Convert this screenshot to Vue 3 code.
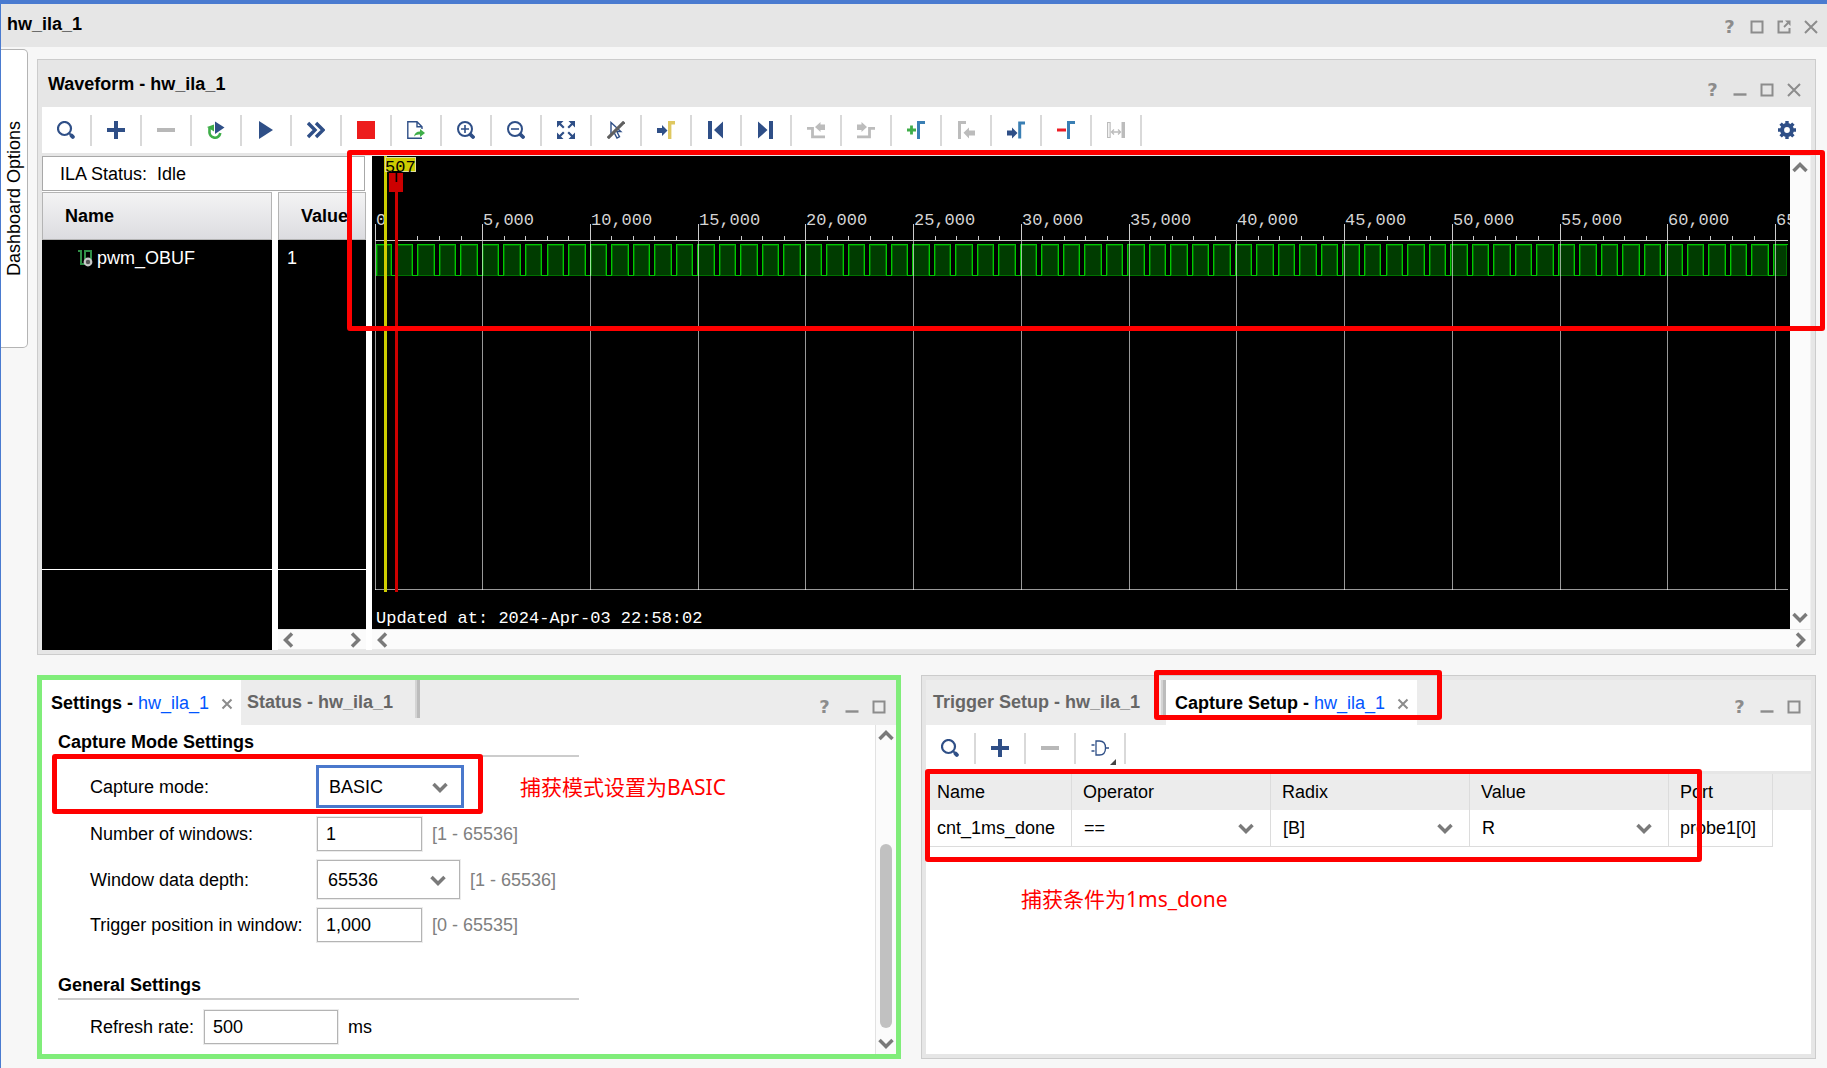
<script setup>
import { ref } from 'vue'

const NAVY = '#2f4f87'

const tools = [
  { id: 'search', label: 'Search' },
  { id: 'plus', label: 'Add probes' },
  { id: 'minus', label: 'Remove probes', off: true },
  { id: 'restart', label: 'Auto re-trigger' },
  { id: 'play', label: 'Run trigger' },
  { id: 'forward', label: 'Run trigger immediate' },
  { id: 'stop', label: 'Stop trigger' },
  { id: 'export', label: 'Export data' },
  { id: 'zoomin', label: 'Zoom in' },
  { id: 'zoomout', label: 'Zoom out' },
  { id: 'fit', label: 'Zoom fit' },
  { id: 'nocursor', label: 'Unlock cursor' },
  { id: 'gocursor', label: 'Go to cursor' },
  { id: 'first', label: 'Go to start' },
  { id: 'last', label: 'Go to end' },
  { id: 'prevedge', label: 'Previous transition', off: true },
  { id: 'nextedge', label: 'Next transition', off: true },
  { id: 'addmark', label: 'Add marker' },
  { id: 'prevmark', label: 'Previous marker', off: true },
  { id: 'nextmark', label: 'Next marker' },
  { id: 'delmark', label: 'Delete marker' },
  { id: 'measure', label: 'Measure', off: true },
]
const captureTools = [
  { id: 'search', label: 'Search' },
  { id: 'plus', label: 'Add' },
  { id: 'minus', label: 'Remove', off: true },
  { id: 'gate', label: 'Condition', menu: true },
]

const icons = {
  search: `<circle cx="7.5" cy="7.5" r="6.5" fill="none" stroke="${NAVY}" stroke-width="2.2"/><path d="M12 12l1.6 1.6" stroke="${NAVY}" stroke-width="2"/><path d="M14.6 14.6l1.2 1.2" stroke="${NAVY}" stroke-width="4" stroke-linecap="round"/>`,
  plus: `<path d="M9 0v18M0 9h18" stroke="${NAVY}" stroke-width="4"/>`,
  minus: `<path d="M0 9h18" stroke="#b8b8b8" stroke-width="4"/>`,
  restart: `<path d="M8 0.5L17.5 6.5L8 13z" fill="${NAVY}"/><path d="M2.500 7v3.500a5.200 5.200 0 0 0 10.800 1.500" fill="none" stroke="#3fae49" stroke-width="2.600"/><path d="M0 6l7-2.500v7z" fill="#3fae49"/>`,
  play: `<path d="M2 0L16 9L2 18z" fill="${NAVY}"/>`,
  forward: `<path d="M1 2l7 7l-7 7M9 2l7 7l-7 7" fill="none" stroke="${NAVY}" stroke-width="3.400"/>`,
  stop: `<path d="M0 0h18v18h-18z" fill="#ed1c1c"/>`,
  export: `<path d="M15 17.200H0.800V0.800H10l5 5V8M10 0.800V5.800H15" fill="none" stroke="${NAVY}" stroke-width="1.400"/><path d="M7 15.500q1-5 6-5v-2.500l5 4l-5 4v-2.500q-4-0.500-6 2z" fill="#3fae49"/>`,
  zoomin: `<circle cx="8" cy="8" r="7" fill="none" stroke="${NAVY}" stroke-width="2"/><path d="M4 8h8M8 4v8" stroke="${NAVY}" stroke-width="1.600"/><path d="M13.500 13.500l2.500 2.500" stroke="${NAVY}" stroke-width="3.800" stroke-linecap="round"/>`,
  zoomout: `<circle cx="8" cy="8" r="7" fill="none" stroke="${NAVY}" stroke-width="2"/><path d="M4 8h8" stroke="${NAVY}" stroke-width="1.600"/><path d="M13.500 13.500l2.500 2.500" stroke="${NAVY}" stroke-width="3.800" stroke-linecap="round"/>`,
  fit: `<path d="M0 0h6.500L0 6.500zM18 0v6.500L11.500 0zM0 18v-6.500L6.500 18zM18 18h-6.500L18 11.500z" fill="${NAVY}"/><path d="M2 2l4.800 4.800M16 2l-4.800 4.800M2 16l4.800-4.800M16 16l-4.800-4.800" stroke="${NAVY}" stroke-width="2.200"/>`,
  nocursor: `<path d="M4 1.500v13l3-3l3 5.500l2.500-1.200l-2.700-5.300h4z" fill="#fff" stroke="${NAVY}" stroke-width="1.400"/><path d="M0.800 17.200L17.200 0.800" stroke="#606060" stroke-width="3.200"/>`,
  gocursor: `<path d="M0 7h5v-3l5.500 5.500l-5.500 5.500v-3h-5z" fill="${NAVY}"/><path d="M12.700 18V1.700H18" fill="none" stroke="#dfc861" stroke-width="3.400"/>`,
  first: `<path d="M1 0h4v18h-4zM16 0.500v17L7 9z" fill="${NAVY}"/>`,
  last: `<path d="M12 0h4v18h-4zM1 0.500v17L10.500 9z" fill="${NAVY}"/>`,
  prevedge: `<path d="M0 7.300h5.500v8.500h12.500" fill="none" stroke="#bcbcbc" stroke-width="2.800"/><path d="M8 6l5.500-5v2.500h4.500v5.500h-4.500v2z" fill="#bcbcbc"/>`,
  nextedge: `<path d="M18 7.300h-5.500v8.500h-12.500" fill="none" stroke="#bcbcbc" stroke-width="2.800"/><path d="M10 6l-5.500-5v2.500h-4.500v5.500h4.500v2z" fill="#bcbcbc"/>`,
  addmark: `<path d="M0 9h9M4.500 4.500v9" stroke="#3fae49" stroke-width="2.800"/><path d="M11.500 18V1.500H18" fill="none" stroke="#3a7fb4" stroke-width="3"/>`,
  prevmark: `<path d="M2.500 18V1.500H9" fill="none" stroke="#bcbcbc" stroke-width="3"/><path d="M6.500 11.800l5.500-5.300v3h6v5h-6v3z" fill="#bcbcbc"/>`,
  nextmark: `<path d="M0 9.500h5v-3l5.500 5.500l-5.500 5.500v-3h-5z" fill="${NAVY}"/><path d="M12.700 17.500V2H18" fill="none" stroke="#3a7fb4" stroke-width="3"/>`,
  delmark: `<path d="M0 9h9" stroke="#ed1c24" stroke-width="3"/><path d="M11.500 18V1.500H18" fill="none" stroke="#3a7fb4" stroke-width="3"/>`,
  measure: `<path d="M0.600 1.500h2.500v15h-2.500z" fill="none" stroke="#bcbcbc" stroke-width="1.200"/><path d="M14.500 1h3.500v16h-3.500z" fill="#bcbcbc"/><path d="M4.500 11h9M7 8.500l-2.500 2.500l2.500 2.500M11 8.500l2.500 2.500l-2.500 2.500" fill="none" stroke="#bcbcbc" stroke-width="1.300"/>`,
  gate: `<path d="M5 2h3.500c4 0 6 3 6 7s-2 7-6 7H5z" fill="none" stroke="${NAVY}" stroke-width="1.300"/><path d="M14.500 9h3.500M0.500 6h3M0.500 12h3" stroke="${NAVY}" stroke-width="1.600"/>`,
  gear: `<circle cx="9" cy="9" r="4.900" fill="none" stroke="${NAVY}" stroke-width="4"/><path d="M9 0v3M9 15v3M0 9h3M15 9h3M2.600 2.600l2.200 2.200M13.200 13.200l2.200 2.200M2.600 15.400l2.200-2.200M13.200 4.800l2.200-2.200" stroke="${NAVY}" stroke-width="3.400"/>`,
  min: `<path d="M2.500 13.500h13" stroke="#8c8c8c" stroke-width="2.400"/>`,
  max: `<path d="M3.500 3.500h11v11h-11z" fill="none" stroke="#8c8c8c" stroke-width="2"/>`,
  pop: `<path d="M8 3.500H3.500v11h11V10" fill="none" stroke="#8c8c8c" stroke-width="2"/><path d="M10 2.500h5.500V8z" fill="#8c8c8c"/><path d="M9 9l4-4" stroke="#8c8c8c" stroke-width="1.800"/>`,
  close: `<path d="M3 3l12 12M15 3L3 15" stroke="#8c8c8c" stroke-width="2"/>`,
}

const winTop = ['help', 'max', 'pop', 'close']
const winWave = ['help', 'min', 'max', 'close']
const winPane = ['help', 'min', 'max']
const winLabels = { help: 'Help', min: 'Minimize', max: 'Maximize', pop: 'Float', close: 'Close' }

/* Sample axis: one major division is 5,000 samples */
const majors = Array.from({ length: 14 }, (_, i) => ({
  x: Math.max(3, Math.floor(2.8 + i * 107.75)),
  label: (i * 5000).toLocaleString('en-US'),
}))
const minors = Array.from({ length: 65 }, (_, i) => i)
  .filter((i) => i % 5)
  .map((i) => Math.floor(2.8 + i * 21.55))

const END = 1415
const pulses = Array.from({ length: 66 }, (_, k) => {
  const x = Math.max(4, Math.floor(2.9 + k * 21.513))
  const end = Math.min(END, Math.floor(19.4 + k * 21.513))
  return { x, w: end - x }
}).filter((p) => p.w > 0)
const trace = pulses
  .map((p, i) => `${i ? 'L' : 'M'}${p.x + 0.5} 119.5V88.5H${p.x + p.w + 0.5}` + (i < pulses.length - 1 ? 'V119.5' : ''))
  .join('')

const captureMode = ref('BASIC')
const windows = ref('1')
const depth = ref('65536')
const position = ref('1,000')
const rate = ref('500')
const operator = ref('==')
const radix = ref('[B]')
const value = ref('R')
</script>

<template>
  <div class="app">
    <header class="titlebar">
      <h1>hw_ila_1</h1>
      <div class="win">
        <button v-for="w in winTop" :key="w" :aria-label="winLabels[w]">
          <b v-if="w === 'help'">?</b>
          <svg v-else width="18" height="18" v-html="icons[w]"></svg>
        </button>
      </div>
    </header>

    <div class="workspace">
      <aside><button class="side-tab">Dashboard Options</button></aside>

      <main>
        <section class="panel wave-panel">
          <header class="wave-title">
            <h2>Waveform - hw_ila_1</h2>
            <div class="win">
              <button v-for="w in winWave" :key="w" :aria-label="winLabels[w]">
                <b v-if="w === 'help'">?</b>
                <svg v-else width="18" height="18" v-html="icons[w]"></svg>
              </button>
            </div>
          </header>

          <div class="toolbar">
            <button v-for="t in tools" :key="t.id" :aria-label="t.label" :disabled="t.off">
              <svg width="18" height="18" v-html="icons[t.id]"></svg>
            </button>
            <button class="gear" aria-label="Settings"><svg width="18" height="18" v-html="icons.gear"></svg></button>
          </div>

          <div class="wave-body">
            <div class="signals">
              <div class="status">ILA Status:&nbsp; Idle</div>
              <div class="columns">
                <div class="col name-col">
                  <div class="col-head">Name</div>
                  <div class="col-body">
                    <div class="signal">
                      <svg width="15" height="17">
                        <path d="M0 1h3v13h4V1h6v9" fill="none" stroke="#2f8f46" stroke-width="2" />
                        <circle cx="10" cy="12" r="3.300" fill="#555" stroke="#c8c8c8" stroke-width="2.200" />
                      </svg>
                      pwm_OBUF
                    </div>
                    <div class="divider name-divider"></div>
                  </div>
                </div>
                <div class="col value-col">
                  <div class="col-head">Value</div>
                  <div class="col-body">
                    <div class="signal">1</div>
                    <div class="divider"></div>
                  </div>
                  <div class="hscroll">
                    <svg width="12" height="16"><path d="M10 1.500L3.500 8L10 14.500" /></svg>
                    <svg width="12" height="16"><path d="M2 1.500L8.500 8L2 14.500" /></svg>
                  </div>
                </div>
              </div>
            </div>

            <div class="viewer">
              <div class="canvas-row">
                <div class="canvas">
                  <svg class="plot" shape-rendering="crispEdges">
                    <path class="axis" :d="`M3 84.5H${END + 1}`" />
                    <rect v-for="x in minors" :key="x" class="tick" :x="x" y="80" width="1" height="5" />
                    <rect v-for="p in pulses" :key="p.x" class="pulse" :x="p.x + 1.5" y="89.5" :width="p.w - 2" height="30" />
                    <path class="trace" :d="trace" />
                    <g v-for="m in majors" :key="m.x">
                      <rect class="tick" :x="m.x" y="68" width="1" height="17" />
                      <rect class="grid" :x="m.x" y="85" width="1" height="349" />
                      <text class="label" :x="m.x + 1" y="69">{{ m.label }}</text>
                    </g>
                    <rect class="grid" x="3" y="433" :width="END - 2" height="1" />
                    <rect x="12" y="0" width="3" height="436" fill="#cccc00" />
                    <rect x="13.500" y="1.500" width="30" height="14" fill="#cccc00" stroke="#dddda0" />
                    <rect x="17" y="17" width="14" height="19" fill="#cc0000" />
                    <rect x="23" y="36" width="3" height="400" fill="#cc0000" />
                    <text x="13" y="16">507</text>
                    <text x="19" y="26">T</text>
                  </svg>
                  <div class="updated">Updated at: 2024-Apr-03 22:58:02</div>
                </div>
                <div class="vscroll">
                  <svg width="16" height="12"><path d="M1.500 10L8 3.500L14.500 10" /></svg>
                  <svg width="16" height="12"><path d="M1.500 2L8 8.500L14.500 2" /></svg>
                </div>
              </div>
              <div class="hscroll">
                <svg width="12" height="16"><path d="M10 1.500L3.500 8L10 14.500" /></svg>
                <svg width="12" height="16"><path d="M2 1.500L8.500 8L2 14.500" /></svg>
              </div>
            </div>
          </div>
          <div class="mark mark-wave"></div>
        </section>

        <div class="lower">
          <section class="panel settings-panel">
            <header class="tabs">
              <div class="tab active">
                <b>Settings -&nbsp;</b><a href="#">hw_ila_1</a>
                <button class="tab-close" aria-label="Close tab"><svg width="12" height="12"><path d="M1.500 1.500l9 9M10.500 1.500l-9 9" /></svg></button>
              </div>
              <div class="tab idle">Status - hw_ila_1</div>
              <span class="tab-sep"></span>
              <div class="win">
                <button v-for="w in winPane" :key="w" :aria-label="winLabels[w]">
                  <b v-if="w === 'help'">?</b>
                  <svg v-else width="18" height="18" v-html="icons[w]"></svg>
                </button>
              </div>
            </header>
            <div class="settings-row">
              <form class="settings" @submit.prevent>
                <h3>Capture Mode Settings</h3>
                <div class="fields">
                  <div class="field capture-field">
                    <label for="mode">Capture mode:</label>
                    <span class="select focus">
                      <select id="mode" v-model="captureMode"><option>BASIC</option><option>ALWAYS</option></select>
                      <svg width="16" height="12"><path d="M1.500 2L8 8.500L14.500 2" /></svg>
                    </span>
                    <span class="note">捕获模式设置为BASIC</span>
                    <div class="mark mark-mode"></div>
                  </div>
                  <div class="field">
                    <label for="windows">Number of windows:</label>
                    <input id="windows" v-model="windows" type="text" />
                    <span class="range">[1 - 65536]</span>
                  </div>
                  <div class="field">
                    <label for="depth">Window data depth:</label>
                    <span class="select">
                      <select id="depth" v-model="depth"><option>65536</option><option>32768</option></select>
                      <svg width="16" height="12"><path d="M1.500 2L8 8.500L14.500 2" /></svg>
                    </span>
                    <span class="range">[1 - 65536]</span>
                  </div>
                  <div class="field">
                    <label for="position">Trigger position in window:</label>
                    <input id="position" v-model="position" type="text" />
                    <span class="range">[0 - 65535]</span>
                  </div>
                </div>
                <h3 class="general">General Settings</h3>
                <div class="fields">
                  <div class="field refresh">
                    <label for="rate">Refresh rate:</label>
                    <input id="rate" v-model="rate" type="text" />
                    <span>ms</span>
                  </div>
                </div>
              </form>
              <div class="vscroll pane-scroll">
                <svg width="16" height="12"><path d="M1.500 10L8 3.500L14.500 10" /></svg>
                <div class="thumb"></div>
                <svg width="16" height="12"><path d="M1.500 2L8 8.500L14.500 2" /></svg>
              </div>
            </div>
          </section>

          <section class="panel capture-panel">
            <header class="tabs">
              <div class="tab idle trigger-tab">Trigger Setup - hw_ila_1</div>
              <span class="tab-sep"></span>
              <div class="tab active capture-tab">
                <b>Capture Setup -&nbsp;</b><a href="#">hw_ila_1</a>
                <button class="tab-close" aria-label="Close tab"><svg width="12" height="12"><path d="M1.500 1.500l9 9M10.500 1.500l-9 9" /></svg></button>
                <div class="mark mark-tab"></div>
              </div>
              <div class="win">
                <button v-for="w in winPane" :key="w" :aria-label="winLabels[w]">
                  <b v-if="w === 'help'">?</b>
                  <svg v-else width="18" height="18" v-html="icons[w]"></svg>
                </button>
              </div>
            </header>
            <div class="toolbar">
              <button v-for="t in captureTools" :key="t.id" :aria-label="t.label" :disabled="t.off">
                <svg width="18" height="18" v-html="icons[t.id]"></svg>
                <i v-if="t.menu" class="corner"></i>
              </button>
            </div>
            <div class="table-wrap">
              <table>
                <colgroup>
                  <col class="c-name" /><col class="c-mid" /><col class="c-mid" /><col class="c-mid" /><col class="c-port" /><col />
                </colgroup>
                <thead>
                  <tr><th>Name</th><th>Operator</th><th>Radix</th><th>Value</th><th>Port</th><td></td></tr>
                </thead>
                <tbody>
                  <tr>
                    <td>cnt_1ms_done</td>
                    <td>
                      <span class="cell-select">
                        <select v-model="operator" aria-label="Operator"><option>==</option><option>!=</option></select>
                        <svg width="16" height="12"><path d="M1.500 2L8 8.500L14.500 2" /></svg>
                      </span>
                    </td>
                    <td>
                      <span class="cell-select">
                        <select v-model="radix" aria-label="Radix"><option>[B]</option><option>[H]</option></select>
                        <svg width="16" height="12"><path d="M1.500 2L8 8.500L14.500 2" /></svg>
                      </span>
                    </td>
                    <td>
                      <span class="cell-select">
                        <select v-model="value" aria-label="Value"><option>R</option><option>F</option></select>
                        <svg width="16" height="12"><path d="M1.500 2L8 8.500L14.500 2" /></svg>
                      </span>
                    </td>
                    <td>probe1[0]</td>
                    <td class="blank"></td>
                  </tr>
                </tbody>
              </table>
              <div class="mark mark-table"></div>
            </div>
            <p class="note condition">捕获条件为1ms_done</p>
          </section>
        </div>
      </main>
    </div>
  </div>
</template>

<style>
body {
  margin: 0;
}
</style>

<style scoped>
.app,
.app * {
  box-sizing: border-box;
}
.app {
  display: flex;
  flex-direction: column;
  min-height: 100vh;
  overflow: hidden;
  border-top: 4px solid #4a7bd0;
  border-left: 1px solid #4a7bd0;
  background: #f7f7f7;
  color: #000;
  font: 18px/22px "Liberation Sans", Arial, sans-serif;
}
h1,
h2,
h3,
p {
  margin: 0;
  font-size: 18px;
}
button {
  display: flex;
  align-items: center;
  justify-content: center;
  border: 0;
  padding: 0;
  background: none;
  font: inherit;
  color: inherit;
}
svg {
  display: block;
  flex: none;
}
a {
  color: #0055ff;
  text-decoration: none;
}

.titlebar {
  display: flex;
  justify-content: space-between;
  height: 43px;
  padding: 9px 3px 0 6px;
  background: #e6e6e6;
}
.win {
  display: flex;
  align-items: center;
  height: 28px;
  margin-left: auto;
}
.win button {
  width: 27px;
  height: 18px;
}
.win b {
  color: #8c8c8c;
  font-family: "DejaVu Sans", sans-serif;
  font-size: 18px;
  line-height: 18px;
}

.workspace {
  display: flex;
  flex: 1;
}
aside {
  width: 36px;
  padding-top: 2px;
}
.side-tab {
  width: 27px;
  height: 299px;
  border: 1px solid #b4b4b4;
  border-right: 0;
  border-radius: 5px 0 0 5px;
  background: #fff;
  writing-mode: vertical-rl;
  transform: rotate(180deg);
}
main {
  display: grid;
  flex: 1;
  grid-template-rows: 596fr 384fr;
  grid-template-columns: minmax(0, 1fr);
  gap: 20px;
  min-width: 0;
  padding: 12px 11px 9px 0;
}
.panel {
  display: flex;
  flex-direction: column;
  position: relative;
  min-width: 0;
  border: 1px solid #ccc;
  padding: 4px;
  background: #e6e6e6;
}

.wave-panel {
  padding-top: 0;
}
.wave-title {
  display: flex;
  height: 47px;
  padding: 13px 4px 0 6px;
}
.wave-title .win {
  margin-top: 3px;
}
.toolbar {
  display: flex;
  align-items: center;
  height: 46px;
  margin-bottom: 3px;
  background: #fff;
}
.toolbar button {
  position: relative;
  width: 50px;
  height: 31px;
  border-right: 2px solid #d9d9d9;
}
.toolbar .gear {
  width: 48px;
  margin-left: auto;
  border: 0;
}
.corner {
  position: absolute;
  right: 8px;
  bottom: -1px;
  border-left: 6px solid transparent;
  border-bottom: 6px solid #444;
}

.wave-body {
  display: flex;
  flex: 1;
  gap: 6px;
  background: #fff;
}
.signals {
  display: flex;
  flex-direction: column;
  width: 324px;
}
.status {
  width: 323px;
  height: 35px;
  margin-bottom: 1px;
  border: 1px solid #a8a8a8;
  padding-left: 17px;
  line-height: 35px;
}
.columns {
  display: flex;
  flex: 1;
  gap: 6px;
}
.col {
  display: flex;
  flex-direction: column;
}
.name-col {
  width: 230px;
}
.value-col {
  width: 88px;
}
.col-head {
  height: 48px;
  border: 1px solid #b4b4b4;
  padding-left: 22px;
  background: linear-gradient(#f3f3f4, #dcdce0);
  font-weight: 700;
  line-height: 46px;
}
.col-body {
  display: flex;
  flex: 1;
  flex-direction: column;
  background: #000;
  color: #fff;
}
.signal {
  display: flex;
  align-items: center;
  gap: 4px;
  height: 36px;
  padding-left: 36px;
}
.value-col .signal {
  padding-left: 9px;
}
.divider {
  height: 1px;
  margin-top: auto;
  margin-bottom: 59px;
  background: #fff;
}
.name-divider {
  margin-bottom: 80px;
}
.hscroll,
.vscroll {
  display: flex;
  justify-content: space-between;
  align-items: center;
  background: #fbfbfb;
}
.hscroll {
  height: 21px;
  border-top: 1px solid #e8e8e8;
  border-bottom: 1px solid #e8e8e8;
  padding: 0 4px;
}
.vscroll {
  flex-direction: column;
  width: 21px;
  border-right: 1px solid #f0f0f0;
  padding: 5px 0;
}
.hscroll path,
.vscroll path,
.select path,
.cell-select path {
  fill: none;
  stroke: #7a7a7a;
  stroke-width: 3.5;
}

.viewer {
  display: flex;
  flex: 1;
  flex-direction: column;
  min-width: 0;
}
.canvas-row {
  display: flex;
  flex: 1;
}
.canvas {
  display: flex;
  flex: 1;
  flex-direction: column;
  min-width: 0;
  background: #000;
}
.plot {
  width: 100%;
  height: 436px;
}
.plot text,
.updated {
  font: 17px "Liberation Mono", monospace;
}
.plot .label {
  fill: #d4d4d4;
}
.axis {
  stroke: #ccc;
}
.tick {
  fill: #ccc;
}
.grid {
  fill: #fff;
  fill-opacity: 0.6;
}
.pulse {
  fill: #003c00;
  stroke: #007000;
}
.trace {
  fill: none;
  stroke: #00c800;
}
.updated {
  padding: 17px 0 0 4px;
  color: #fff;
}

.mark {
  position: absolute;
  border: 5px solid #f00;
  border-radius: 3px;
  pointer-events: none;
  z-index: 2;
}
.mark-wave {
  top: 90px;
  left: 309px;
  right: -10px;
  height: 181px;
}
.mark-mode {
  top: -11px;
  left: -6px;
  width: 431px;
  height: 60px;
}
.mark-tab {
  top: -10px;
  left: -12px;
  right: -25px;
  height: 50px;
}
.mark-table {
  top: -5px;
  left: -1px;
  width: 777px;
  height: 93px;
}

.lower {
  display: grid;
  grid-template-columns: minmax(0, 864fr) minmax(0, 895fr);
  gap: 20px;
}
.settings-panel {
  border: 5px solid #80ed7a;
  padding: 0;
  background: #fff;
}
.tabs {
  display: flex;
  height: 45px;
  padding-right: 4px;
  background: #ececec;
}
.tab {
  display: flex;
  align-items: center;
  position: relative;
}
.tab.active {
  width: 199px;
  padding-left: 9px;
  background: #fff;
}
.tab.active.capture-tab {
  width: 251px;
}
.tab.idle {
  width: 174px;
  padding: 0 0 2px 6px;
  color: #666;
  font-weight: 700;
}
.tab.idle.trigger-tab {
  width: 235px;
  padding-left: 7px;
}
.tab-close {
  margin: 2px 0 0 12px;
}
.tab-close path {
  stroke: #8c8c8c;
  stroke-width: 2;
}
.tab-sep {
  width: 5px;
  height: 38px;
  border-left: 2px solid #d4d4d4;
  border-right: 3px solid #bcbcbc;
}
.tabs .win {
  margin-top: 13px;
}

.settings-row {
  display: flex;
  flex: 1;
}
.settings {
  flex: 1;
  padding-left: 16px;
}
h3 {
  width: 521px;
  height: 32px;
  border-bottom: 2px solid #ccc;
  padding-top: 4px;
  line-height: 26px;
}
h3.general {
  margin-top: 26px;
}
.fields {
  display: flex;
  flex-direction: column;
  gap: 9px;
  padding-top: 8px;
}
.field {
  display: flex;
  align-items: center;
  position: relative;
}
.field label {
  width: 259px;
  padding-left: 32px;
}
.field.refresh {
  padding-top: 2px;
}
.field.refresh label {
  width: 146px;
}
.field.refresh input {
  width: 134px;
}
.field input {
  width: 105px;
  height: 34px;
  margin-right: 10px;
  border: 1px solid #b4b4b4;
  outline: 1px solid #ececec;
  padding: 0 8px;
  background: #fff;
  color: #000;
  font: inherit;
}
.select,
.cell-select {
  display: flex;
  position: relative;
}
.select {
  width: 143px;
  height: 39px;
  margin-right: 10px;
  border: 1px solid #b4b4b4;
  outline: 1px solid #ececec;
}
.select.focus {
  width: 148px;
  height: 43px;
  margin: 0 56px 0 -1px;
  border: 3px solid #4a78cc;
  outline: 0;
}
select {
  appearance: none;
  width: 100%;
  border: 0;
  padding: 0 0 0 10px;
  background: none;
  color: #000;
  font: inherit;
}
.select svg,
.cell-select svg {
  position: absolute;
  top: 50%;
  right: 13px;
  margin-top: -5px;
  pointer-events: none;
}
.range {
  color: #808080;
}
.note {
  color: #f00;
  font: 21px/28px "Noto Sans", "Noto Sans CJK SC", sans-serif;
}
.pane-scroll {
  border-left: 1px solid #e2e2e2;
  border-right: 0;
  padding: 4px 0;
}
.thumb {
  width: 12px;
  height: 184px;
  margin-top: auto;
  margin-bottom: 10px;
  border-radius: 6px;
  background: #c1c1c1;
}

.capture-panel {
  background: #fff;
  box-shadow: inset 0 0 0 4px #e6e6e6;
}
.capture-panel .toolbar {
  margin-bottom: 0;
}
.table-wrap {
  position: relative;
  border-top: 3px solid #e6e6e6;
}
table {
  width: 100%;
  border-collapse: separate;
  border-spacing: 0;
  table-layout: fixed;
}
.c-name {
  width: 146px;
}
.c-mid {
  width: 199px;
}
.c-port {
  width: 104px;
}
th,
td {
  height: 36px;
  border-right: 1px solid #dcdcdc;
  padding: 0 0 0 11px;
  text-align: left;
  font-weight: 400;
}
thead th,
thead td {
  background: #ececec;
}
thead td,
.blank {
  border-right: 0;
}
tbody td {
  height: 37px;
  border-bottom: 1px solid #dcdcdc;
}
tbody .blank {
  border-bottom: 0;
}
.cell-select select {
  padding: 0 0 0 1px;
}
.cell-select svg {
  right: 16px;
}
.condition {
  padding: 38px 0 0 95px;
}
</style>
